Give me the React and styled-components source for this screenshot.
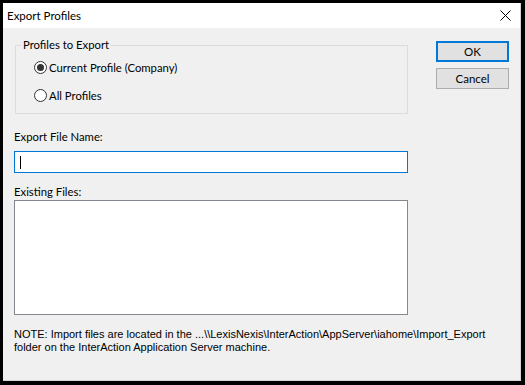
import React from 'react';
import styled, { createGlobalStyle } from 'styled-components';

const GlobalStyle = createGlobalStyle`
  html, body {
    margin: 0;
    padding: 0;
    background: #000;
  }
  * {
    box-sizing: border-box;
  }
`;

const Frame = styled.div`
  width: 525px;
  height: 385px;
  background: #000;
  padding: 3px 4px 4px 3px;
`;

const Window = styled.div`
  width: 100%;
  height: 100%;
  display: flex;
  flex-direction: column;
  background: #f0f0f0;
  border-right: 1px solid #d4d4d4;
  border-bottom: 1px solid #d4d4d4;
  font-family: Lato, 'Noto Sans', sans-serif;
  font-size: 11.3px;
  color: #000;
`;

const TitleBar = styled.div`
  height: 25px;
  flex-shrink: 0;
  display: flex;
  align-items: center;
  justify-content: space-between;
  background: #fff;
  padding: 0 0 0 4px;
`;

const Title = styled.span`
  font-size: 11.5px;
`;

const CloseButton = styled.button`
  width: 46px;
  height: 25px;
  border: none;
  background: transparent;
  display: flex;
  align-items: center;
  justify-content: center;
  padding: 0 0 0 16px;
`;

const Body = styled.div`
  flex: 1;
  display: flex;
  padding-left: 11px;
`;

const MainColumn = styled.div`
  width: 394px;
  display: flex;
  flex-direction: column;
`;

const SideColumn = styled.div`
  width: 73px;
  margin-left: 28px;
  padding-top: 13px;
  display: flex;
  flex-direction: column;
  gap: 6px;
`;

const Button = styled.button`
  width: 73px;
  height: 21px;
  font-family: inherit;
  font-size: 11.5px;
  color: #000;
  background: #e1e1e1;
  border: ${(p) => (p.$default ? '2px solid #0078d7' : '1px solid #adadad')};
  padding: 0;
`;

const GroupBox = styled.fieldset`
  margin: 9px 0 0 1px;
  width: 393px;
  border: 1px solid #dcdcdc;
  padding: 0 0 4px 5px;
`;

const Legend = styled.legend`
  padding: 0 2px;
  line-height: 16px;
`;

const RadioRow = styled.label`
  height: 28px;
  display: flex;
  align-items: center;
  gap: 2px;
  margin-left: 13px;
`;

const RadioCircle = styled.span`
  width: 13px;
  height: 13px;
  border-radius: 50%;
  border: 1px solid #333;
  background: #fff;
  display: flex;
  align-items: center;
  justify-content: center;

  &::after {
    content: '';
    width: 7px;
    height: 7px;
    border-radius: 50%;
    background: ${(p) => (p.$checked ? '#333' : 'transparent')};
  }
`;

const FieldLabel = styled.div`
  line-height: 16px;
  margin-top: ${(p) => p.$top}px;
`;

const TextBox = styled.div`
  margin-top: 6px;
  height: 22px;
  background: #fff;
  border: 1px solid #0078d7;
  display: flex;
  align-items: center;
  padding-left: 5px;
`;

const Caret = styled.span`
  width: 1px;
  height: 13px;
  background: #000;
`;

const ListBox = styled.div`
  height: 115px;
  background: #fff;
  border: 1px solid #828790;
`;

const Note = styled.p`
  margin: 13px 0 0;
  width: 500px;
  white-space: nowrap;
  font-family: 'Liberation Sans', Arial, sans-serif;
  font-size: 11px;
  line-height: 13px;
`;

const Radio = ({ checked, children }) => (
  <RadioRow>
    <RadioCircle $checked={checked} />
    {children}
  </RadioRow>
);

const App = () => (
  <>
    <GlobalStyle />
    <Frame>
      <Window>
        <TitleBar>
          <Title>Export Profiles</Title>
          <CloseButton aria-label="Close">
            <svg width="11" height="11" viewBox="0 0 11 11">
              <path d="M0.5 0.5 L10.5 10.5 M10.5 0.5 L0.5 10.5" stroke="#000" strokeWidth="1" />
            </svg>
          </CloseButton>
        </TitleBar>
        <Body>
          <MainColumn>
            <GroupBox>
              <Legend>Profiles to Export</Legend>
              <Radio checked>Current Profile (Company)</Radio>
              <Radio>All Profiles</Radio>
            </GroupBox>
            <FieldLabel $top={15}>Export File Name:</FieldLabel>
            <TextBox>
              <Caret />
            </TextBox>
            <FieldLabel $top={11}>Existing Files:</FieldLabel>
            <ListBox />
            <Note>
              NOTE: Import files are located in the ...\\LexisNexis\InterAction\AppServer\iahome\Import_Export
              <br />
              folder on the InterAction Application Server machine.
            </Note>
          </MainColumn>
          <SideColumn>
            <Button $default>OK</Button>
            <Button>Cancel</Button>
          </SideColumn>
        </Body>
      </Window>
    </Frame>
  </>
);

export default App;
